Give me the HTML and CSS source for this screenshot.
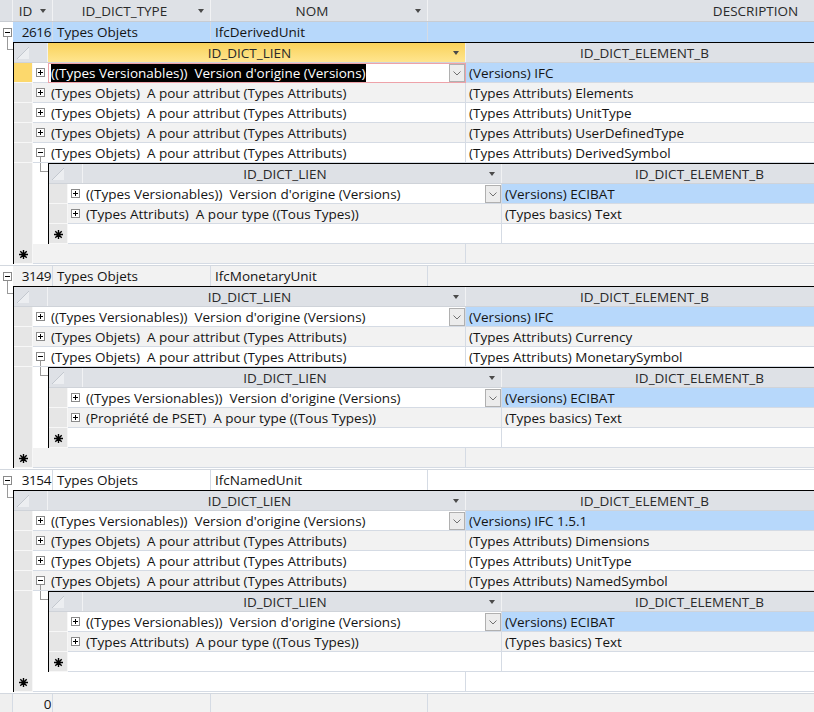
FILE: index.html
```html
<!DOCTYPE html>
<html lang="fr">
<head>
<meta charset="utf-8">
<title>Datasheet</title>
<link rel="stylesheet" href="styles.css">
</head>
<body>
<div class="sheet">
  <div class="thead">
    <div class="hc t-gut"></div>
    <div class="hc t-id"><span class="ht">ID</span><i class="dd"></i></div>
    <div class="hc t-type"><span class="ht">ID_DICT_TYPE</span><i class="dd"></i></div>
    <div class="hc t-nom"><span class="ht">NOM</span><i class="dd"></i></div>
    <div class="hc t-desc"><span class="ht">DESCRIPTION</span></div>
  </div>

  <!-- Record 2616 -->
  <div class="trow b">
    <div class="gut"><svg class="box" width="9" height="9" viewBox="0 0 9 9"><rect x=".5" y=".5" width="8" height="8" fill="#fff" stroke="#8a8a8a"/><path d="M2 4.5h5" stroke="#000"/></svg><span class="vline"></span></div>
    <div class="c t-id num">2616</div>
    <div class="c t-type">Types Objets</div>
    <div class="c t-nom">IfcDerivedUnit</div>
    <div class="c t-desc"></div>
  </div>
  <div class="subwrap">
    <div class="gut"><span class="elbow"></span></div>
    <div class="sub">
      <div class="shead">
        <div class="hc corner"><svg width="12" height="12" viewBox="0 0 12 12"><path d="M0 12L12 0V12Z" fill="#eceef1"/><path d="M0 12L12 0" stroke="#c3c8cf"/></svg></div>
        <div class="hc s-lien gold"><span class="ht">ID_DICT_LIEN</span><i class="dd"></i></div>
        <div class="hc s-b"><span class="ht">ID_DICT_ELEMENT_B</span></div>
      </div>
      <div class="srow">
        <div class="rs sel"></div>
        <div class="ex"><svg class="box" width="9" height="9" viewBox="0 0 9 9"><rect x=".5" y=".5" width="8" height="8" fill="#fff" stroke="#8a8a8a"/><path d="M2 4.5h5M4.5 2v5" stroke="#000"/></svg></div>
        <div class="c s-lien combo focus"><span class="tx"><span class="hl">((Types Versionables))  Version d'origine (Versions)</span></span><span class="btn"><svg width="8" height="5" viewBox="0 0 8 5"><path d="M.5 .5L4 4L7.5 .5" fill="none" stroke="#707070"/></svg></span></div>
        <div class="c s-b b">(Versions) IFC</div>
      </div>
      <div class="srow g">
        <div class="rs"></div>
        <div class="ex"><svg class="box" width="9" height="9" viewBox="0 0 9 9"><rect x=".5" y=".5" width="8" height="8" fill="#fff" stroke="#8a8a8a"/><path d="M2 4.5h5M4.5 2v5" stroke="#000"/></svg></div>
        <div class="c s-lien">(Types Objets)  A pour attribut (Types Attributs)</div>
        <div class="c s-b">(Types Attributs) Elements</div>
      </div>
      <div class="srow">
        <div class="rs"></div>
        <div class="ex"><svg class="box" width="9" height="9" viewBox="0 0 9 9"><rect x=".5" y=".5" width="8" height="8" fill="#fff" stroke="#8a8a8a"/><path d="M2 4.5h5M4.5 2v5" stroke="#000"/></svg></div>
        <div class="c s-lien">(Types Objets)  A pour attribut (Types Attributs)</div>
        <div class="c s-b">(Types Attributs) UnitType</div>
      </div>
      <div class="srow g">
        <div class="rs"></div>
        <div class="ex"><svg class="box" width="9" height="9" viewBox="0 0 9 9"><rect x=".5" y=".5" width="8" height="8" fill="#fff" stroke="#8a8a8a"/><path d="M2 4.5h5M4.5 2v5" stroke="#000"/></svg></div>
        <div class="c s-lien">(Types Objets)  A pour attribut (Types Attributs)</div>
        <div class="c s-b">(Types Attributs) UserDefinedType</div>
      </div>
      <div class="srow">
        <div class="rs"></div>
        <div class="ex"><svg class="box" width="9" height="9" viewBox="0 0 9 9"><rect x=".5" y=".5" width="8" height="8" fill="#fff" stroke="#8a8a8a"/><path d="M2 4.5h5" stroke="#000"/></svg><span class="vline"></span></div>
        <div class="c s-lien">(Types Objets)  A pour attribut (Types Attributs)</div>
        <div class="c s-b">(Types Attributs) DerivedSymbol</div>
      </div>
      <div class="nwrap">
        <div class="nspace"><span class="ns1"></span><span class="ns2"><span class="elbow2"></span></span></div>
        <div class="sub nest">
          <div class="shead">
            <div class="hc corner"><svg width="12" height="12" viewBox="0 0 12 12"><path d="M0 12L12 0V12Z" fill="#eceef1"/><path d="M0 12L12 0" stroke="#c3c8cf"/></svg></div>
            <div class="hc n-lien"><span class="ht">ID_DICT_LIEN</span><i class="dd"></i></div>
            <div class="hc n-b"><span class="ht">ID_DICT_ELEMENT_B</span></div>
          </div>
          <div class="srow">
            <div class="rs"></div>
            <div class="ex"><svg class="box" width="9" height="9" viewBox="0 0 9 9"><rect x=".5" y=".5" width="8" height="8" fill="#fff" stroke="#8a8a8a"/><path d="M2 4.5h5M4.5 2v5" stroke="#000"/></svg></div>
            <div class="c n-lien combo"><span class="tx">((Types Versionables))  Version d'origine (Versions)</span><span class="btn"><svg width="8" height="5" viewBox="0 0 8 5"><path d="M.5 .5L4 4L7.5 .5" fill="none" stroke="#707070"/></svg></span></div>
            <div class="c n-b b">(Versions) ECIBAT</div>
          </div>
          <div class="srow g">
            <div class="rs"></div>
            <div class="ex"><svg class="box" width="9" height="9" viewBox="0 0 9 9"><rect x=".5" y=".5" width="8" height="8" fill="#fff" stroke="#8a8a8a"/><path d="M2 4.5h5M4.5 2v5" stroke="#000"/></svg></div>
            <div class="c n-lien">(Types Attributs)  A pour type ((Tous Types))</div>
            <div class="c n-b">(Types basics) Text</div>
          </div>
          <div class="srow">
            <div class="rs"><svg class="star" width="9" height="9" viewBox="0 0 9 9"><path d="M4.5 0v9M0 4.5h9M1.3 1.3l6.4 6.4M7.7 1.3l-6.4 6.4" stroke="#000" stroke-width="1.4"/></svg></div>
            <div class="ex"></div>
            <div class="c n-lien"></div>
            <div class="c n-b"></div>
          </div>
        </div>
      </div>
      <div class="srow g">
        <div class="rs"><svg class="star" width="9" height="9" viewBox="0 0 9 9"><path d="M4.5 0v9M0 4.5h9M1.3 1.3l6.4 6.4M7.7 1.3l-6.4 6.4" stroke="#000" stroke-width="1.4"/></svg></div>
        <div class="ex"></div>
        <div class="c s-lien"></div>
        <div class="c s-b"></div>
      </div>
    </div>
  </div>

  <!-- Record 3149 -->
  <div class="trow g">
    <div class="gut"><svg class="box" width="9" height="9" viewBox="0 0 9 9"><rect x=".5" y=".5" width="8" height="8" fill="#fff" stroke="#8a8a8a"/><path d="M2 4.5h5" stroke="#000"/></svg><span class="vline"></span></div>
    <div class="c t-id num">3149</div>
    <div class="c t-type">Types Objets</div>
    <div class="c t-nom">IfcMonetaryUnit</div>
    <div class="c t-desc"></div>
  </div>
  <div class="subwrap">
    <div class="gut"><span class="elbow"></span></div>
    <div class="sub">
      <div class="shead">
        <div class="hc corner"><svg width="12" height="12" viewBox="0 0 12 12"><path d="M0 12L12 0V12Z" fill="#eceef1"/><path d="M0 12L12 0" stroke="#c3c8cf"/></svg></div>
        <div class="hc s-lien"><span class="ht">ID_DICT_LIEN</span><i class="dd"></i></div>
        <div class="hc s-b"><span class="ht">ID_DICT_ELEMENT_B</span></div>
      </div>
      <div class="srow">
        <div class="rs"></div>
        <div class="ex"><svg class="box" width="9" height="9" viewBox="0 0 9 9"><rect x=".5" y=".5" width="8" height="8" fill="#fff" stroke="#8a8a8a"/><path d="M2 4.5h5M4.5 2v5" stroke="#000"/></svg></div>
        <div class="c s-lien combo"><span class="tx">((Types Versionables))  Version d'origine (Versions)</span><span class="btn"><svg width="8" height="5" viewBox="0 0 8 5"><path d="M.5 .5L4 4L7.5 .5" fill="none" stroke="#707070"/></svg></span></div>
        <div class="c s-b b">(Versions) IFC</div>
      </div>
      <div class="srow g">
        <div class="rs"></div>
        <div class="ex"><svg class="box" width="9" height="9" viewBox="0 0 9 9"><rect x=".5" y=".5" width="8" height="8" fill="#fff" stroke="#8a8a8a"/><path d="M2 4.5h5M4.5 2v5" stroke="#000"/></svg></div>
        <div class="c s-lien">(Types Objets)  A pour attribut (Types Attributs)</div>
        <div class="c s-b">(Types Attributs) Currency</div>
      </div>
      <div class="srow">
        <div class="rs"></div>
        <div class="ex"><svg class="box" width="9" height="9" viewBox="0 0 9 9"><rect x=".5" y=".5" width="8" height="8" fill="#fff" stroke="#8a8a8a"/><path d="M2 4.5h5" stroke="#000"/></svg><span class="vline"></span></div>
        <div class="c s-lien">(Types Objets)  A pour attribut (Types Attributs)</div>
        <div class="c s-b">(Types Attributs) MonetarySymbol</div>
      </div>
      <div class="nwrap">
        <div class="nspace"><span class="ns1"></span><span class="ns2"><span class="elbow2"></span></span></div>
        <div class="sub nest">
          <div class="shead">
            <div class="hc corner"><svg width="12" height="12" viewBox="0 0 12 12"><path d="M0 12L12 0V12Z" fill="#eceef1"/><path d="M0 12L12 0" stroke="#c3c8cf"/></svg></div>
            <div class="hc n-lien"><span class="ht">ID_DICT_LIEN</span><i class="dd"></i></div>
            <div class="hc n-b"><span class="ht">ID_DICT_ELEMENT_B</span></div>
          </div>
          <div class="srow">
            <div class="rs"></div>
            <div class="ex"><svg class="box" width="9" height="9" viewBox="0 0 9 9"><rect x=".5" y=".5" width="8" height="8" fill="#fff" stroke="#8a8a8a"/><path d="M2 4.5h5M4.5 2v5" stroke="#000"/></svg></div>
            <div class="c n-lien combo"><span class="tx">((Types Versionables))  Version d'origine (Versions)</span><span class="btn"><svg width="8" height="5" viewBox="0 0 8 5"><path d="M.5 .5L4 4L7.5 .5" fill="none" stroke="#707070"/></svg></span></div>
            <div class="c n-b b">(Versions) ECIBAT</div>
          </div>
          <div class="srow g">
            <div class="rs"></div>
            <div class="ex"><svg class="box" width="9" height="9" viewBox="0 0 9 9"><rect x=".5" y=".5" width="8" height="8" fill="#fff" stroke="#8a8a8a"/><path d="M2 4.5h5M4.5 2v5" stroke="#000"/></svg></div>
            <div class="c n-lien">(Propriété de PSET)  A pour type ((Tous Types))</div>
            <div class="c n-b">(Types basics) Text</div>
          </div>
          <div class="srow">
            <div class="rs"><svg class="star" width="9" height="9" viewBox="0 0 9 9"><path d="M4.5 0v9M0 4.5h9M1.3 1.3l6.4 6.4M7.7 1.3l-6.4 6.4" stroke="#000" stroke-width="1.4"/></svg></div>
            <div class="ex"></div>
            <div class="c n-lien"></div>
            <div class="c n-b"></div>
          </div>
        </div>
      </div>
      <div class="srow g">
        <div class="rs"><svg class="star" width="9" height="9" viewBox="0 0 9 9"><path d="M4.5 0v9M0 4.5h9M1.3 1.3l6.4 6.4M7.7 1.3l-6.4 6.4" stroke="#000" stroke-width="1.4"/></svg></div>
        <div class="ex"></div>
        <div class="c s-lien"></div>
        <div class="c s-b"></div>
      </div>
    </div>
  </div>

  <!-- Record 3154 -->
  <div class="trow">
    <div class="gut"><svg class="box" width="9" height="9" viewBox="0 0 9 9"><rect x=".5" y=".5" width="8" height="8" fill="#fff" stroke="#8a8a8a"/><path d="M2 4.5h5" stroke="#000"/></svg><span class="vline"></span></div>
    <div class="c t-id num">3154</div>
    <div class="c t-type">Types Objets</div>
    <div class="c t-nom">IfcNamedUnit</div>
    <div class="c t-desc"></div>
  </div>
  <div class="subwrap">
    <div class="gut"><span class="elbow"></span></div>
    <div class="sub">
      <div class="shead">
        <div class="hc corner"><svg width="12" height="12" viewBox="0 0 12 12"><path d="M0 12L12 0V12Z" fill="#eceef1"/><path d="M0 12L12 0" stroke="#c3c8cf"/></svg></div>
        <div class="hc s-lien"><span class="ht">ID_DICT_LIEN</span><i class="dd"></i></div>
        <div class="hc s-b"><span class="ht">ID_DICT_ELEMENT_B</span></div>
      </div>
      <div class="srow">
        <div class="rs"></div>
        <div class="ex"><svg class="box" width="9" height="9" viewBox="0 0 9 9"><rect x=".5" y=".5" width="8" height="8" fill="#fff" stroke="#8a8a8a"/><path d="M2 4.5h5M4.5 2v5" stroke="#000"/></svg></div>
        <div class="c s-lien combo"><span class="tx">((Types Versionables))  Version d'origine (Versions)</span><span class="btn"><svg width="8" height="5" viewBox="0 0 8 5"><path d="M.5 .5L4 4L7.5 .5" fill="none" stroke="#707070"/></svg></span></div>
        <div class="c s-b b">(Versions) IFC 1.5.1</div>
      </div>
      <div class="srow g">
        <div class="rs"></div>
        <div class="ex"><svg class="box" width="9" height="9" viewBox="0 0 9 9"><rect x=".5" y=".5" width="8" height="8" fill="#fff" stroke="#8a8a8a"/><path d="M2 4.5h5M4.5 2v5" stroke="#000"/></svg></div>
        <div class="c s-lien">(Types Objets)  A pour attribut (Types Attributs)</div>
        <div class="c s-b">(Types Attributs) Dimensions</div>
      </div>
      <div class="srow">
        <div class="rs"></div>
        <div class="ex"><svg class="box" width="9" height="9" viewBox="0 0 9 9"><rect x=".5" y=".5" width="8" height="8" fill="#fff" stroke="#8a8a8a"/><path d="M2 4.5h5M4.5 2v5" stroke="#000"/></svg></div>
        <div class="c s-lien">(Types Objets)  A pour attribut (Types Attributs)</div>
        <div class="c s-b">(Types Attributs) UnitType</div>
      </div>
      <div class="srow g">
        <div class="rs"></div>
        <div class="ex"><svg class="box" width="9" height="9" viewBox="0 0 9 9"><rect x=".5" y=".5" width="8" height="8" fill="#fff" stroke="#8a8a8a"/><path d="M2 4.5h5" stroke="#000"/></svg><span class="vline"></span></div>
        <div class="c s-lien">(Types Objets)  A pour attribut (Types Attributs)</div>
        <div class="c s-b">(Types Attributs) NamedSymbol</div>
      </div>
      <div class="nwrap">
        <div class="nspace"><span class="ns1"></span><span class="ns2"><span class="elbow2"></span></span></div>
        <div class="sub nest">
          <div class="shead">
            <div class="hc corner"><svg width="12" height="12" viewBox="0 0 12 12"><path d="M0 12L12 0V12Z" fill="#eceef1"/><path d="M0 12L12 0" stroke="#c3c8cf"/></svg></div>
            <div class="hc n-lien"><span class="ht">ID_DICT_LIEN</span><i class="dd"></i></div>
            <div class="hc n-b"><span class="ht">ID_DICT_ELEMENT_B</span></div>
          </div>
          <div class="srow">
            <div class="rs"></div>
            <div class="ex"><svg class="box" width="9" height="9" viewBox="0 0 9 9"><rect x=".5" y=".5" width="8" height="8" fill="#fff" stroke="#8a8a8a"/><path d="M2 4.5h5M4.5 2v5" stroke="#000"/></svg></div>
            <div class="c n-lien combo"><span class="tx">((Types Versionables))  Version d'origine (Versions)</span><span class="btn"><svg width="8" height="5" viewBox="0 0 8 5"><path d="M.5 .5L4 4L7.5 .5" fill="none" stroke="#707070"/></svg></span></div>
            <div class="c n-b b">(Versions) ECIBAT</div>
          </div>
          <div class="srow g">
            <div class="rs"></div>
            <div class="ex"><svg class="box" width="9" height="9" viewBox="0 0 9 9"><rect x=".5" y=".5" width="8" height="8" fill="#fff" stroke="#8a8a8a"/><path d="M2 4.5h5M4.5 2v5" stroke="#000"/></svg></div>
            <div class="c n-lien">(Types Attributs)  A pour type ((Tous Types))</div>
            <div class="c n-b">(Types basics) Text</div>
          </div>
          <div class="srow">
            <div class="rs"><svg class="star" width="9" height="9" viewBox="0 0 9 9"><path d="M4.5 0v9M0 4.5h9M1.3 1.3l6.4 6.4M7.7 1.3l-6.4 6.4" stroke="#000" stroke-width="1.4"/></svg></div>
            <div class="ex"></div>
            <div class="c n-lien"></div>
            <div class="c n-b"></div>
          </div>
        </div>
      </div>
      <div class="srow">
        <div class="rs"><svg class="star" width="9" height="9" viewBox="0 0 9 9"><path d="M4.5 0v9M0 4.5h9M1.3 1.3l6.4 6.4M7.7 1.3l-6.4 6.4" stroke="#000" stroke-width="1.4"/></svg></div>
        <div class="ex"></div>
        <div class="c s-lien"></div>
        <div class="c s-b"></div>
      </div>
    </div>
  </div>

  <!-- New record -->
  <div class="trow g">
    <div class="gut gg"></div>
    <div class="c t-id num">0</div>
    <div class="c t-type"></div>
    <div class="c t-nom"></div>
    <div class="c t-desc"></div>
  </div>
</div>
</body>
</html>
```

FILE: styles.css
```css
* { box-sizing: border-box; }
html, body { margin: 0; padding: 0; background: #fff; }
body {
  font-family: "Open Sans", "Liberation Sans", sans-serif;
  font-size: 13.5px;
  color: #141414;
}
.sheet { width: 814px; height: 712px; overflow: hidden; }

.thead, .trow, .shead, .srow, .subwrap, .nwrap { display: flex; }
.thead > *, .trow > *, .shead > *, .srow > *, .subwrap > *, .nwrap > * { flex: none; }

/* headers */
.thead { height: 22px; background: #dee1e6; border-bottom: 1px solid #c8ccd2; }
.shead { height: 20px; background: #dee1e6; border-bottom: 1px solid #cfd3d9; }
.hc {
  display: flex;
  align-items: center;
  height: 100%;
  border-right: 1px solid #f1f2f4;
  color: #2a2a2a;
}
.ht { flex: 1; text-align: center; white-space: nowrap; }
.dd {
  flex: none;
  width: 0;
  height: 0;
  margin: 1px 6px 0 2px;
  border-left: 3.5px solid transparent;
  border-right: 3.5px solid transparent;
  border-top: 4px solid #4a4a4a;
}
.gold { background: linear-gradient(#f9d25b, #ffe58f); }
.corner { width: 34px; align-items: flex-start; padding: 4px 0 0 3px; }

/* column widths */
.t-gut { width: 13px; }
.t-id { width: 40px; }
.t-type { width: 158px; }
.t-nom { width: 217px; }
.t-desc { width: 656px; }
.s-lien { width: 418px; }
.s-b { width: 358px; }
.n-lien { width: 419px; }
.n-b { width: 396px; }

/* top level rows */
.trow { height: 20px; }
.trow .c {
  line-height: 20px;
  padding: 0 4px;
  border-right: 1px solid #d5dbe4;
  white-space: pre;
  overflow: hidden;
}
.trow .num { text-align: right; padding-right: 1px; letter-spacing: -0.4px; }
.trow.g .c { background: #f2f2f2; }
.trow.b .c { background: #b7d8fb; }

.gut { width: 13px; display: flex; flex-direction: column; background: #fff; }
.gut.gg { background: #efefef; border-right: 1px solid #d5dbe4; }
.gut .box { flex: none; margin: 6px 0 0 3px; }
.vline { width: 1px; margin-left: 7px; flex: 1; background: #9a9a9a; }
.elbow {
  display: block;
  margin-left: 7px;
  width: 6px;
  height: 8px;
  border-left: 1px solid #9a9a9a;
  border-bottom: 1px solid #9a9a9a;
}

/* subdatasheets */
.subwrap { border-bottom: 1px solid #d3d8df; padding-bottom: 1px; }
.sub { width: 811px; border-top: 1px solid #000; border-left: 1px solid #000; }
.sub.nest { width: 850px; }

.srow { height: 20px; }
.rs {
  width: 19px;
  background: #e6e6e6;
  border-right: 1px solid #f7f7f7;
  border-bottom: 1px solid #f7f7f7;
  display: flex;
  align-items: center;
  justify-content: center;
}
.rs.sel { background: #fcd86c; }
.star { margin-top: 1px; }
.ex {
  width: 15px;
  display: flex;
  flex-direction: column;
  border-bottom: 1px solid #d5dbe4;
}
.ex .box { flex: none; margin: 5px 0 0 3px; }
.srow .c {
  border-right: 1px solid #d5dbe4;
  border-bottom: 1px solid #d5dbe4;
  padding: 1px 3px 0;
  line-height: 18px;
  white-space: pre;
  overflow: hidden;
}
.srow.g .ex, .srow.g .c { background: #f2f2f2; }
.srow .c.b { background: #b7d8fb; }

.srow .combo { display: flex; padding-right: 0; }
.tx { flex: 1; overflow: hidden; white-space: pre; }
.btn {
  flex: none;
  width: 16px;
  height: 18px;
  border: 1px solid #b0b0b0;
  background: #ececec;
  display: flex;
  align-items: center;
  justify-content: center;
}
.focus { outline: 1px solid #eea2a9; outline-offset: -1px; background: #fff; }
.hl { display: inline-block; background: #000; color: #fff; line-height: 18px; }

.nspace { width: 34px; display: flex; background: #fff; }
.ns1 { width: 19px; background: #e6e6e6; border-right: 1px solid #f7f7f7; }
.ns2 { width: 15px; }
.elbow2 {
  display: block;
  margin-left: 7px;
  width: 8px;
  height: 9px;
  border-left: 1px solid #9a9a9a;
  border-bottom: 1px solid #9a9a9a;
}
```
